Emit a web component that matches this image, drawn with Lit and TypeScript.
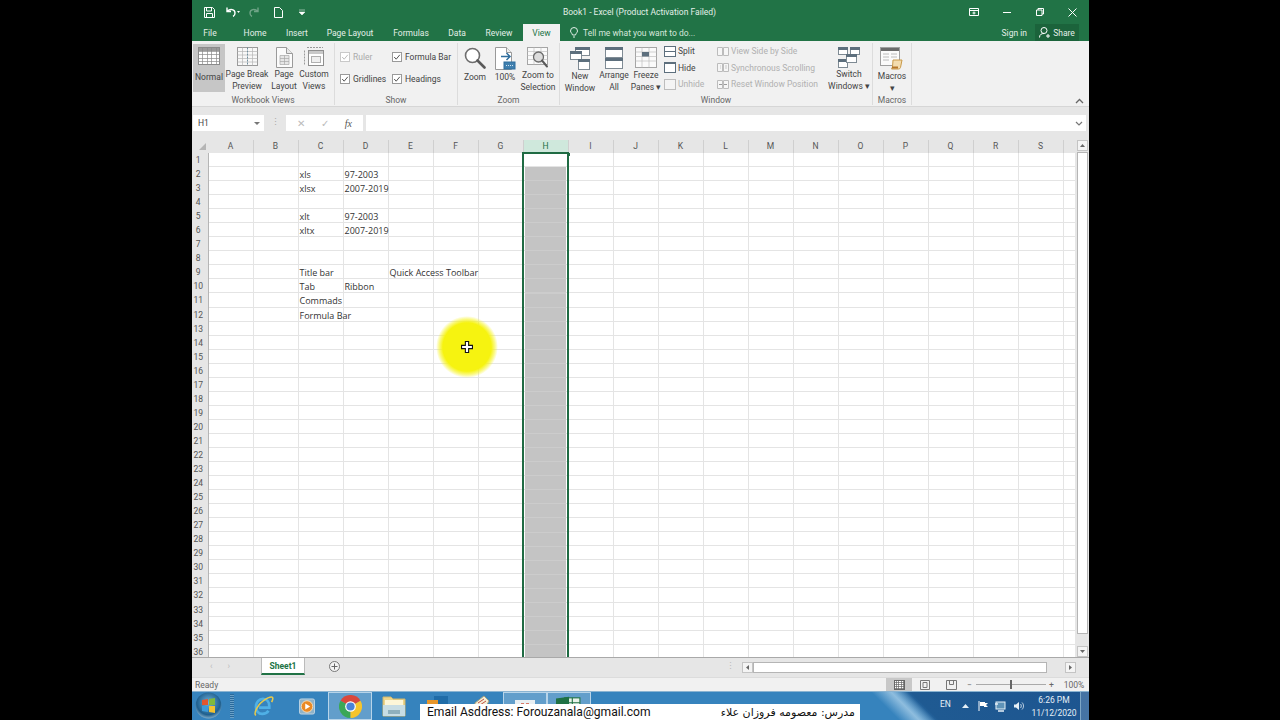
import { LitElement, html, svg, css, nothing } from 'lit';
import { customElement } from 'lit/decorators.js';

const COLS = 'ABCDEFGHIJKLMNOPQRS'.split('');
const ROWS = Array.from({ length: 36 }, (_, i) => i + 1);
const CELLS: Record<string, string> = {
  C2: 'xls', D2: '97-2003',
  C3: 'xlsx', D3: '2007-2019',
  C5: 'xlt', D5: '97-2003',
  C6: 'xltx', D6: '2007-2019',
  C9: 'Title bar', E9: 'Quick Access Toolbar',
  C10: 'Tab', D10: 'Ribbon',
  C11: 'Commads',
  C12: 'Formula Bar',
};

const TABS = [
  { label: 'File', cls: 'w-file' },
  { label: 'Home', cls: 'w-home' },
  { label: 'Insert', cls: 'w-insert' },
  { label: 'Page Layout', cls: 'w-layout' },
  { label: 'Formulas', cls: 'w-formulas' },
  { label: 'Data', cls: 'w-data' },
  { label: 'Review', cls: 'w-review' },
  { label: 'View', cls: 'w-view active' },
];

const gridIcon = (w = 22, h = 19, stroke = '#8d8d8d', head = '#cfcfcf') => {
  const xs = [0.2, 0.4, 0.6, 0.8].map((f) => Math.round(f * w) + 0.5);
  const ys = [0.2, 0.4, 0.6, 0.8].map((f) => Math.round(f * h) + 0.5);
  return html`<svg width=${w} height=${h} viewBox="0 0 ${w} ${h}">
    <rect x=".5" y=".5" width=${w - 1} height=${h - 1} fill="#fff" stroke=${stroke} />
    <rect x="1" y="1" width=${w - 2} height="3" fill=${head} />
    ${xs.map((x) => svg`<path d="M${x} 0V${h}" stroke=${stroke} stroke-width=".7" />`)}
    ${ys.map((y) => svg`<path d="M0 ${y}H${w}" stroke=${stroke} stroke-width=".7" />`)}
  </svg>`;
};

const pageBreakIcon = () => html`<svg width="21" height="19" viewBox="0 0 21 19">
  <rect x=".5" y=".5" width="20" height="18" fill="#f8f8f8" stroke="#9a9a9a" />
  <path d="M.5 4.5h20M.5 8h20M.5 11.5h20M.5 15h20M5.5 .5v18M15.5 .5v18" stroke="#b5b5b5" stroke-width=".7" />
  <path d="M10.5 .5v18" stroke="#6e8b9a" stroke-dasharray="2 1" />
</svg>`;

const pageIcon = () => html`<svg width="17" height="21" viewBox="0 0 17 21">
  <path d="M.5.5h10l6 6v14H.5z" fill="#fbfbfb" stroke="#9a9a9a" />
  <path d="M10.5.5v6h6" fill="#e8e8e8" stroke="#9a9a9a" />
  <path d="M4 8.5h9v9H4zM4 11.5h9M4 14.5h9M8.5 8.5v9" fill="#e6e6e6" stroke="#a8a8a8" stroke-width=".7" />
</svg>`;

const customIcon = () => html`<svg width="21" height="21" viewBox="0 0 21 21">
  <path d="M.5 3.5v14M3 .5h16" stroke="#9a9a9a" fill="none" stroke-dasharray="2 1" />
  <rect x="4.5" y="3.5" width="15" height="15" fill="#fff" stroke="#8f8f8f" />
  <rect x="5" y="4" width="14" height="3" fill="#c9c9c9" />
  <rect x="7.5" y="9.5" width="9" height="6" fill="#efefef" stroke="#b0b0b0" />
</svg>`;

const zoomIcon = () => html`<svg width="22" height="22" viewBox="0 0 22 22">
  <circle cx="8.5" cy="8.5" r="7" fill="#fff" stroke="#6e6e6e" stroke-width="1.6" />
  <path d="M13.5 13.5l7 7" stroke="#5a5a5a" stroke-width="2.6" stroke-linecap="round" />
</svg>`;

const hundredIcon = () => html`<svg width="22" height="24" viewBox="0 0 22 24">
  <path d="M1.5.5h11l5 5v17h-16z" fill="#fff" stroke="#9a9a9a" />
  <path d="M12.5.5v5h5" fill="#eee" stroke="#9a9a9a" />
  <path d="M7 9.5h9M12.5 6l3.5 3.5-3.5 3.5" fill="none" stroke="#2f6e9e" stroke-width="1.5" />
  <rect x="10" y="15" width="11" height="7" fill="#3f7fae" stroke="#2f6e9e" />
  <path d="M12 18.5h7" stroke="#cfe2ef" stroke-dasharray="1 1" />
</svg>`;

const zoomSelIcon = () => html`<svg width="22" height="22" viewBox="0 0 22 22">
  <rect x=".5" y=".5" width="20" height="17" fill="#fafafa" stroke="#a5a5a5" />
  <path d="M.5 4.5h20M.5 8.5h20M.5 12.5h20M7 .5v17M14 .5v17" stroke="#c2c2c2" stroke-width=".7" />
  <circle cx="11.5" cy="10" r="5" fill="#dcdcdc" stroke="#6b6b6b" stroke-width="1.3" />
  <path d="M15 13.5l5 6" stroke="#5a5a5a" stroke-width="2" stroke-linecap="round" />
</svg>`;

const win = (x: number, y: number, w: number, h: number) => svg`
  <rect x=${x + 0.5} y=${y + 0.5} width=${w} height=${h} fill="#fff" stroke="#7f8b94" />
  <rect x=${x} y=${y} width=${w + 1} height="3" fill="#5d6f7d" />
`;

const newWindowIcon = () => html`<svg width="20" height="23" viewBox="0 0 20 23">
  ${win(5, 0, 14, 8)} ${win(0, 4, 11, 8)} ${win(8, 12, 11, 10)}
</svg>`;

const arrangeIcon = () => html`<svg width="18" height="22" viewBox="0 0 18 22">
  ${win(0, 0, 17, 10)} ${win(0, 11, 17, 10)}
</svg>`;

const switchIcon = () => html`<svg width="22" height="21" viewBox="0 0 22 21">
  ${win(0, 0, 9, 7)} ${win(12, 0, 9, 7)} ${win(0, 12, 9, 8)} ${win(8, 7, 10, 8)}
</svg>`;

const freezeIcon = () => html`<svg width="22" height="22" viewBox="0 0 22 22">
  <rect x=".5" y=".5" width="21" height="20" fill="#fafafa" stroke="#a5a5a5" />
  <path d="M.5 5h21M.5 9.5h21M.5 14h21M7 .5v20M14 .5v20" stroke="#bdbdbd" stroke-width=".7" />
  <rect x="7" y="5" width="7" height="4.5" fill="#5d6f7d" />
</svg>`;

const smallWin = (dark: boolean, mode: string) => html`<svg width="12" height="11" viewBox="0 0 12 11">
  <rect x=".5" y=".5" width="11" height="10" fill=${dark ? '#fff' : '#f4f4f4'} stroke=${dark ? '#5d6f7d' : '#bdbdbd'} />
  ${mode === 'split' ? svg`<path d="M0 5.5h12" stroke="#5d6f7d" />` : nothing}
  ${mode === 'hide' ? svg`<path d="M0 1h12" stroke="#5d6f7d" stroke-width="2" />` : nothing}
</svg>`;

const sideIcon = (mode: string) => html`<svg width="12" height="11" viewBox="0 0 12 11">
  <path d="M.5 1.5h5v8h-5zM6.5 1.5h5v8h-5z" fill="#f6f6f6" stroke="#bcbcbc" />
  ${mode === 'sync' ? svg`<path d="M3 4h1M8 4h2M3 6h1M8 6h2" stroke="#c8c8c8" />` : nothing}
  ${mode === 'reset' ? svg`<path d="M2 5.5h3M7 5.5h3" stroke="#9a9a9a" />` : nothing}
</svg>`;

const macrosIcon = () => html`<svg width="24" height="23" viewBox="0 0 24 23">
  <rect x=".5" y=".5" width="19" height="18" fill="#fbfbfb" stroke="#a0a0a0" />
  <rect x="1" y="1" width="18" height="3" fill="#6b6b6b" />
  <path d="M3 7h6M11 7h6M3 10h6M11 10h6M3 13h6" stroke="#bcbcbc" />
  <path d="M13 13h9l-1.5 7.5c-.5 1-1 1.5-2 1.5h-7l1-2z" fill="#f3dcae" stroke="#c99a4a" />
  <path d="M12 20.5h6" stroke="#b5762a" stroke-width="2" />
</svg>`;

const check = (on: boolean) => html`<svg class="check" width="10" height="10" viewBox="0 0 10 10">
  <rect x=".5" y=".5" width="9" height="9" fill="#fff" stroke=${on ? '#9a9a9a' : '#c9c9c9'} />
  <path d="M2.2 5l2 2.2 3.6-4.4" fill="none" stroke=${on ? '#555' : '#bdbdbd'} />
</svg>`;

const startOrb = () => html`<svg width="27" height="27" viewBox="0 0 27 27">
  <defs>
    <radialGradient id="orb" cx=".5" cy=".4" r=".65">
      <stop offset="0" stop-color="#6fb3dd" />
      <stop offset=".7" stop-color="#1f5f8e" />
      <stop offset="1" stop-color="#9fc6dc" />
    </radialGradient>
  </defs>
  <circle cx="13.5" cy="13.5" r="13" fill="url(#orb)" />
  <path d="M7 8l6-1v6H7z" fill="#e2562f" />
  <path d="M14 7l6-1v7h-6z" fill="#7fb93d" />
  <path d="M7 14h6v6l-6-1z" fill="#3c9ad9" />
  <path d="M14 14h6v7l-6-1z" fill="#f2c230" />
</svg>`;

const ieIcon = () => html`<svg width="22" height="22" viewBox="0 0 28 28">
  <path d="M21 20c-2 3-5 4-8 4-5 0-8-4-8-9 0-6 4-10 9-10 5 0 8 4 8 9v2H9" fill="none" stroke="#4fb0e6" stroke-width="3.4" />
  <path d="M5 26C2 24 6 12 18 5c3-2 7-3 8-2 1 1 0 4-1 6" fill="none" stroke="#e8c94a" stroke-width="2" />
</svg>`;

const mediaIcon = () => html`<svg width="16" height="17" viewBox="0 0 18 18">
  <rect x=".5" y=".5" width="17" height="17" rx="2" fill="#8fb3c9" stroke="#c9dbe6" />
  <circle cx="9" cy="9" r="6.5" fill="#ea8a25" stroke="#fbe2bd" />
  <path d="M7 5.5l5.5 3.5-5.5 3.5z" fill="#fff" />
</svg>`;

const chromeIcon = () => html`<svg width="23" height="23" viewBox="0 0 24 24">
  <path d="M12 12L22.4 6A12 12 0 0 0 1.6 6z" fill="#d9473c" />
  <path d="M12 12L1.6 6A12 12 0 0 0 12 24z" fill="#3aa757" />
  <path d="M12 12V24A12 12 0 0 0 22.4 6z" fill="#f6c42c" />
  <circle cx="12" cy="12" r="5.6" fill="#fff" />
  <circle cx="12" cy="12" r="4.3" fill="#4a82d8" />
</svg>`;

const folderIcon = () => html`<svg width="24" height="22" viewBox="0 0 24 22">
  <path d="M1 2h8l2 2h12v17H1z" fill="#eed58a" stroke="#cdb66e" />
  <rect x="3" y="5" width="18" height="5" fill="#fdf6d8" />
  <path d="M1 10h22v11H1z" fill="#c8dde4" />
  <path d="M6 15h12v4H6z" fill="#8fb0bd" />
</svg>`;

const orangeBoxIcon = () => html`<svg width="24" height="22" viewBox="0 0 24 22">
  <path d="M1 5h7V1h14v20H1z" fill="#1f6ca8" />
  <path d="M1 5h11v16H1z" fill="#e8972c" />
</svg>`;

const notesIcon = () => html`<svg width="20" height="22" viewBox="0 0 20 22">
  <path d="M4 8L13 1l5 5-8 14H4z" fill="#f4efd8" stroke="#a7a27f" />
  <path d="M7 8l6-4M9 10l6-4" stroke="#c2503f" />
  <path d="M5 12l5 1" stroke="#4f9a52" stroke-width="2" />
</svg>`;

const paperIcon = () => html`<svg width="24" height="20" viewBox="0 0 24 20">
  <rect x="2" y="4" width="20" height="16" fill="#e9eff3" />
  <path d="M8 7h3v3H8zM13 7h3v3h-3z" fill="#d77a6a" />
</svg>`;

const excelIcon = () => html`<svg width="25" height="20" viewBox="0 0 23 17">
  <rect x="8" y="1" width="14" height="15" fill="#e8f2ea" stroke="#1f7144" />
  <path d="M8 5.5h14M8 9.5h14M15 1v15" stroke="#1f7144" />
  <path d="M0 1.5L12 0v17L0 15.5z" fill="#1f7144" />
</svg>`;

@customElement('app-root')
export class AppRoot extends LitElement {
  static styles = css`
    :host {
      display: block;
      width: 1280px;
      height: 720px;
      background: #000;
      overflow: hidden;
      font-family: Roboto, 'Open Sans', sans-serif;
      font-size: 8.5px;
      color: #444;
    }
    svg { display: block; flex: none; }
    .window {
      position: relative;
      margin-left: 192px;
      width: 897px;
      height: 720px;
      display: flex;
      flex-direction: column;
      background: #e6e6e6;
      overflow: hidden;
    }

    /* title and tabs */
    .title {
      height: 24px;
      flex: none;
      background: #217346;
      color: #e3efe8;
      display: grid;
      grid-template-columns: 1fr auto 1fr;
      align-items: center;
    }
    .qat { display: flex; align-items: center; padding-left: 6px; }
    .qat span { width: 23px; display: flex; justify-content: center; }
    .qat .off { opacity: 0.35; }
    .title-text { position: relative; left: -1px; }
    .win-btns { display: flex; justify-content: flex-end; }
    .win-btns span { width: 33px; display: flex; justify-content: center; }
    .tabs {
      height: 17px;
      flex: none;
      background: #217346;
      color: #e3efe8;
      display: flex;
      align-items: stretch;
    }
    .tab { display: flex; align-items: center; justify-content: center; white-space: nowrap; }
    .w-file { width: 36px; }
    .w-home { width: 54px; }
    .w-insert { width: 30px; }
    .w-layout { width: 76px; }
    .w-formulas { width: 46px; }
    .w-data { width: 46px; }
    .w-review { width: 38px; margin-right: 5px; }
    .w-view { width: 37px; }
    .tab.active { background: #f1f1f1; color: #217346; }
    .tell { display: flex; align-items: center; gap: 5px; margin-left: 10px; flex: 1; color: #d6e6dc; }
    .signin { margin-right: 8px; display: flex; align-items: center; }
    .share {
      width: 44px;
      margin-right: 10px;
      background: #1b633b;
      display: flex;
      align-items: center;
      justify-content: center;
      gap: 3px;
    }

    /* ribbon */
    .ribbon {
      height: 66px;
      flex: none;
      box-sizing: border-box;
      background: #f1f1f1;
      border-bottom: 1px solid #d6d6d6;
      display: flex;
      position: relative;
    }
    .group {
      display: flex;
      flex-direction: column;
      border-right: 1px solid #dcdcdc;
      margin: 2px 0 1px;
      box-sizing: border-box;
    }
    .g-views { width: 143px; }
    .g-show { width: 123px; }
    .g-zoom { width: 102px; }
    .g-window { width: 313px; }
    .g-macros { width: 39px; }
    .group-body { flex: 1; display: flex; min-height: 0; }
    .group-label { height: 12px; line-height: 14px; text-align: center; color: #666; flex: none; }
    .big {
      display: flex;
      flex-direction: column;
      align-items: center;
      flex: none;
      box-sizing: border-box;
      height: 48px;
      margin-top: 1px;
      line-height: 12px;
      white-space: nowrap;
    }
    .big .ico { height: 27px; padding-top: 3px; box-sizing: border-box; display: flex; align-items: flex-start; }
    .big.on { background: #c6c6c6; }
    .b28 { width: 28px; }
    .b30 { width: 30px; }
    .b32 { width: 32px; }
    .b34 { width: 34px; }
    .b36 { width: 36px; margin-left: 1px; }
    .b38 { width: 38px; }
    .b44 { width: 44px; }
    .pad-3 { padding-left: 3px; }
    .pad-1 { padding-left: 1px; }
    .show-grid {
      display: grid;
      grid-template-columns: 52px auto;
      grid-auto-rows: 22px;
      padding: 3px 0 0 5px;
    }
    .chk { display: flex; align-items: center; gap: 3px; white-space: nowrap; }
    .chk.dim { color: #aaa; }
    .stack { display: flex; flex-direction: column; flex: none; }
    .stack-a { width: 53px; margin-left: 3px; }
    .stack-b { width: 113px; }
    .small { height: 16.5px; display: flex; align-items: center; gap: 2px; white-space: nowrap; }
    .small.dim { color: #b0b0b0; }
    .collapse { position: absolute; right: 5px; bottom: 2px; }

    /* formula bar */
    .fbar {
      height: 33px;
      flex: none;
      display: flex;
      align-items: flex-start;
      padding-top: 8px;
      box-sizing: border-box;
      background: #e6e6e6;
    }
    .fbox { background: #fff; height: 16px; display: flex; align-items: center; box-sizing: border-box; }
    .namebox { width: 71px; margin-left: 1px; padding: 0 4px 0 5px; justify-content: space-between; }
    .dots { width: 22px; text-align: center; color: #aaa; line-height: 14px; }
    .fxbtns { width: 77px; justify-content: space-around; padding: 0 3px; margin-right: 3px; color: #bbb; font-size: 10px; }
    .fx { font-family: 'Liberation Serif', serif; font-style: italic; color: #555; font-size: 10px; }
    .finput { width: 720px; justify-content: flex-end; padding-right: 3px; }

    /* sheet */
    .sheet { height: 517px; flex: none; display: flex; position: relative; background: #e6e6e6; }
    .cells { width: 883px; overflow: hidden; position: relative; flex: none; }
    .head { height: 13px; display: flex; background: #e6e6e6; }
    .corner { width: 16.5px; position: relative; flex: none; }
    .corner svg { position: absolute; left: 7px; top: 3px; }
    .colh {
      width: 45px;
      flex: none;
      box-sizing: border-box;
      border-right: 1px solid #cfcfcf;
      text-align: center;
      line-height: 12px;
      color: #555;
    }
    .colh.sel { background: #cfe8dc; color: #217346; border-bottom: 1px solid #217346; }
    .colh.rest { width: 11.5px; border: 0; }
    .row { height: 14.06px; display: flex; }
    .rowh {
      width: 16.5px;
      flex: none;
      box-sizing: border-box;
      border-right: 1px solid #b5b5b5;
      text-align: center;
      line-height: 15px;
      color: #555;
      padding-right: 3px;
    }
    .cell {
      width: 45px;
      flex: none;
      box-sizing: border-box;
      background: #fff;
      border-right: 1px solid #e4e4e4;
      border-bottom: 1px solid #e4e4e4;
      padding-left: 1px;
      line-height: 15px;
      color: #333;
      white-space: nowrap;
      font-family: 'Open Sans', sans-serif;
      font-size: 9px;
    }
    .cell.rest { width: 11.5px; padding: 0; border-right: 0; }
    .cell.has { position: relative; z-index: 1; }
    .selection {
      position: absolute;
      left: 330px;
      top: 12px;
      width: 47px;
      bottom: 0;
      box-sizing: border-box;
      border: 2px solid #1f6b43;
      border-bottom: 0;
      padding: 13px 1px 0;
      z-index: 2;
    }
    .selection div {
      height: 100%;
      background: repeating-linear-gradient(#c4c4c4 0 13px, #cccccc 13px 14.06px);
    }
    .handle { position: absolute; right: -3px; top: -1px; width: 3px; height: 3px; background: #1f6b43; }
    .glow {
      position: absolute;
      left: 244px;
      top: 176px;
      width: 62px;
      height: 62px;
      border-radius: 50%;
      background: radial-gradient(circle closest-side, #f6f310 0, #f6f310 78%, rgba(246, 243, 16, 0.5) 90%, rgba(246, 243, 16, 0) 100%);
      z-index: 3;
      display: flex;
      align-items: center;
      justify-content: center;
    }
    .vscroll { flex: 1; position: relative; display: flex; flex-direction: column; align-items: center; }
    .sb-btn {
      width: 11px;
      height: 11px;
      box-sizing: border-box;
      border: 1px solid #c4c4c4;
      background: #f4f4f4;
      display: flex;
      align-items: center;
      justify-content: center;
      flex: none;
    }
    .vtrack { flex: 1; width: 11px; margin: 1px 0; }
    .vthumb { height: 482px; box-sizing: border-box; background: #fff; border: 1px solid #b5b5b5; }

    /* sheet tabs */
    .sheetbar {
      height: 20px;
      flex: none;
      box-sizing: border-box;
      border-top: 1px solid #a9a9a9;
      background: #e6e6e6;
      display: flex;
      align-items: flex-start;
      color: #bbb;
    }
    .nav { width: 69px; display: flex; padding-left: 18px; gap: 15px; box-sizing: border-box; line-height: 17px; }
    .sheettab {
      width: 44px;
      height: 17px;
      box-sizing: border-box;
      background: #fff;
      border-left: 1px solid #bbb;
      border-right: 1px solid #bbb;
      border-bottom: 2px solid #217346;
      color: #217346;
      font-weight: 700;
      text-align: center;
      line-height: 16px;
    }
    .addsheet { margin: 3px 0 0 24px; width: 397px; }
    .hdots { width: 16px; margin-top: 1px; line-height: 15px; }
    .hscroll { display: flex; align-items: center; margin-top: 4px; }
    .hthumb { width: 294px; height: 11px; box-sizing: border-box; background: #fff; border: 1px solid #b5b5b5; }
    .htrack { width: 18px; }

    /* status bar */
    .status {
      height: 14px;
      flex: none;
      background: #f1f1f1;
      display: flex;
      align-items: center;
      color: #666;
      border-top: 1px solid #dcdcdc;
      box-sizing: border-box;
    }
    .ready { padding-left: 3px; flex: 1; }
    .vbtn { width: 26px; height: 13px; display: flex; align-items: center; justify-content: center; }
    .vbtn.on { background: #c8c8c8; }
    .zoomer { display: flex; align-items: center; margin-left: 3px; width: 92px; }
    .slider { position: relative; width: 70px; height: 1px; background: #aaa; margin: 0 3px 0 4px; }
    .slider i { position: absolute; left: 34px; top: -4px; width: 2px; height: 9px; background: #666; }
    .pct { width: 30px; text-align: center; }

    /* taskbar */
    .taskbar {
      height: 29px;
      flex: none;
      display: flex;
      align-items: flex-start;
      background:
        linear-gradient(45deg, rgba(190, 220, 240, 0) 500px, rgba(190, 220, 240, 0.65) 514px, rgba(190, 220, 240, 0) 526px),
        linear-gradient(45deg, #3683bd 516px, #1f5a92 528px, #1d5590 100%);
      border-top: 1px solid #8ab3d1;
      box-sizing: border-box;
      color: #e6f0f7;
      position: relative;
    }
    .start { width: 32px; display: flex; justify-content: center; }
    .grip { width: 4px; height: 24px; margin: 2px 6px 0; background: repeating-linear-gradient(#2a6a9c 0 1px, #68a0c8 1px 2px); }
    .slots { display: flex; margin-left: 1px; }
    .slot { width: 43.7px; height: 28px; display: flex; justify-content: center; align-items: center; box-sizing: border-box; }
    .slot.open { background: rgba(255, 255, 255, 0.22); border: 1px solid rgba(220, 235, 245, 0.7); }
    .tray { position: absolute; right: 0; top: 0; height: 28px; display: flex; align-items: center; }
    .tray .lang { width: 22px; padding-left: 6px; box-sizing: border-box; margin-bottom: 5px; }
    .tray .ic { width: 18px; display: flex; justify-content: center; }
    .clock { width: 52px; text-align: center; line-height: 13px; padding-top: 2px; }
    .desk { width: 9px; height: 28px; background: rgba(255, 255, 255, 0.18); border-left: 1px solid #7da6c6; box-sizing: border-box; }
    .caption {
      position: absolute;
      left: 228px;
      right: 229px;
      bottom: 0;
      height: 16px;
      background: #fff;
      color: #111;
      display: flex;
      justify-content: space-between;
      align-items: center;
      padding: 0 5px 0 7px;
      z-index: 4;
      font-size: 12.1px;
      white-space: nowrap;
    }
    .ar { font-family: 'DejaVu Sans', sans-serif; font-size: 11px; direction: rtl; }
  `;

  private renderBig(icon: unknown, lines: string[], widthCls: string, on = false) {
    return html`<div class="big ${widthCls} ${on ? 'on' : ''}">
      <div class="ico">${icon}</div>
      ${lines.map((l) => html`<div>${l}</div>`)}
    </div>`;
  }

  private renderRibbon() {
    return html`<div class="ribbon">
      <div class="group g-views">
        <div class="group-body pad-1">
          ${this.renderBig(gridIcon(22, 18, '#8a8a8a', '#9a9a9a'), ['Normal'], 'b32', true)}
          ${this.renderBig(pageBreakIcon(), ['Page Break', 'Preview'], 'b44')}
          ${this.renderBig(pageIcon(), ['Page', 'Layout'], 'b30')}
          ${this.renderBig(customIcon(), ['Custom', 'Views'], 'b30')}
        </div>
        <div class="group-label">Workbook Views</div>
      </div>
      <div class="group g-show">
        <div class="group-body show-grid">
          <div class="chk dim">${check(false)}Ruler</div>
          <div class="chk">${check(true)}Formula Bar</div>
          <div class="chk">${check(true)}Gridlines</div>
          <div class="chk">${check(true)}Headings</div>
        </div>
        <div class="group-label">Show</div>
      </div>
      <div class="group g-zoom">
        <div class="group-body pad-3">
          ${this.renderBig(zoomIcon(), ['Zoom'], 'b28')}
          ${this.renderBig(hundredIcon(), ['100%'], 'b32')}
          ${this.renderBig(zoomSelIcon(), ['Zoom to', 'Selection'], 'b34')}
        </div>
        <div class="group-label">Zoom</div>
      </div>
      <div class="group g-window">
        <div class="group-body pad-3">
          ${this.renderBig(newWindowIcon(), ['New', 'Window'], 'b34')}
          ${this.renderBig(arrangeIcon(), ['Arrange', 'All'], 'b34')}
          ${this.renderBig(freezeIcon(), ['Freeze', 'Panes ▾'], 'b30')}
          <div class="stack stack-a">
            <div class="small">${smallWin(true, 'split')}Split</div>
            <div class="small">${smallWin(true, 'hide')}Hide</div>
            <div class="small dim">${smallWin(false, '')}Unhide</div>
          </div>
          <div class="stack stack-b">
            <div class="small dim">${sideIcon('')}View Side by Side</div>
            <div class="small dim">${sideIcon('sync')}Synchronous Scrolling</div>
            <div class="small dim">${sideIcon('reset')}Reset Window Position</div>
          </div>
          ${this.renderBig(switchIcon(), ['Switch', 'Windows ▾'], 'b36')}
        </div>
        <div class="group-label">Window</div>
      </div>
      <div class="group g-macros">
        <div class="group-body">
          ${this.renderBig(macrosIcon(), ['Macros', '▾'], 'b38')}
        </div>
        <div class="group-label">Macros</div>
      </div>
      <svg class="collapse" width="9" height="6" viewBox="0 0 9 6">
        <path d="M1 5l3.5-3.5L8 5" fill="none" stroke="#666" stroke-width="1.3" />
      </svg>
    </div>`;
  }

  private renderSheet() {
    return html`<div class="sheet">
      <div class="cells">
        <div class="head">
          <div class="corner">
            <svg width="7" height="7" viewBox="0 0 7 7"><path d="M7 0v7H0z" fill="#b5b5b5" /></svg>
          </div>
          ${COLS.map((c) => html`<div class="colh ${c === 'H' ? 'sel' : ''}">${c}</div>`)}
          <div class="colh rest"></div>
        </div>
        ${ROWS.map(
          (r) => html`<div class="row">
            <div class="rowh">${r}</div>
            ${COLS.map((c) => {
              const v = CELLS[c + r];
              return html`<div class="cell ${v ? 'has' : ''}">${v ?? ''}</div>`;
            })}
            <div class="cell rest"></div>
          </div>`,
        )}
        <div class="selection"><div></div><span class="handle"></span></div>
        <div class="glow">
          <svg width="12" height="12" viewBox="0 0 11 11">
            <path d="M4 .5h3V4h3.5v3H7v3.5H4V7H.5V4H4z" fill="#fff" stroke="#111" />
          </svg>
        </div>
      </div>
      <div class="vscroll">
        <div class="sb-btn"><svg width="5" height="3" viewBox="0 0 5 3"><path d="M2.5 0L5 3H0z" fill="#666" /></svg></div>
        <div class="vtrack"><div class="vthumb"></div></div>
        <div class="sb-btn"><svg width="5" height="3" viewBox="0 0 5 3"><path d="M0 0h5L2.5 3z" fill="#666" /></svg></div>
      </div>
    </div>`;
  }

  private renderBars() {
    return html`<div class="sheetbar">
        <div class="nav"><span>‹</span><span>›</span></div>
        <div class="sheettab">Sheet1</div>
        <div class="addsheet">
          <svg width="11" height="11" viewBox="0 0 11 11">
            <circle cx="5.5" cy="5.5" r="5" fill="#f4f4f4" stroke="#777" />
            <path d="M5.5 2.5v6M2.5 5.5h6" stroke="#666" />
          </svg>
        </div>
        <div class="hdots">⋮</div>
        <div class="hscroll">
          <div class="sb-btn"><svg width="3" height="5" viewBox="0 0 3 5"><path d="M3 0v5L0 2.5z" fill="#666" /></svg></div>
          <div class="hthumb"></div>
          <div class="htrack"></div>
          <div class="sb-btn"><svg width="3" height="5" viewBox="0 0 3 5"><path d="M0 0l3 2.5L0 5z" fill="#666" /></svg></div>
        </div>
      </div>
      <div class="status">
        <div class="ready">Ready</div>
        <div class="vbtn on">${gridIcon(11, 10, '#666', '#fff')}</div>
        <div class="vbtn">
          <svg width="10" height="10" viewBox="0 0 10 10"><path d="M.5.5h9v9h-9zM3 2.5h4v5H3z" fill="none" stroke="#777" /></svg>
        </div>
        <div class="vbtn">
          <svg width="11" height="10" viewBox="0 0 11 10"><path d="M.5.5h10v9H.5zM3.5.5v4h4v-4" fill="none" stroke="#777" /></svg>
        </div>
        <div class="zoomer">
          <span>−</span>
          <div class="slider"><i></i></div>
          <span>+</span>
        </div>
        <div class="pct">100%</div>
      </div>`;
  }

  private renderTaskbar() {
    return html`<div class="taskbar">
      <div class="start">${startOrb()}</div>
      <div class="grip"></div>
      <div class="slots">
        <div class="slot">${ieIcon()}</div>
        <div class="slot">${mediaIcon()}</div>
        <div class="slot open">${chromeIcon()}</div>
        <div class="slot">${folderIcon()}</div>
        <div class="slot">${orangeBoxIcon()}</div>
        <div class="slot">${notesIcon()}</div>
        <div class="slot open">${paperIcon()}</div>
        <div class="slot open">${excelIcon()}</div>
      </div>
      <div class="tray">
        <div class="lang">EN</div>
        <div class="ic">
          <svg width="7" height="4" viewBox="0 0 7 4"><path d="M3.5 0L7 4H0z" fill="#e6f0f7" /></svg>
        </div>
        <div class="ic">
          <svg width="11" height="10" viewBox="0 0 11 10"><path d="M1 0v10" stroke="#fff" /><path d="M2 1h5v1h3L8 4l2 2H6V5H2z" fill="#fff" /></svg>
        </div>
        <div class="ic">
          <svg width="12" height="11" viewBox="0 0 12 11"><rect x="1" y="1" width="9" height="7" fill="#5f93b8" stroke="#e6f0f7" /><path d="M3 10h6M0 3h3" stroke="#e6f0f7" stroke-width="1.5" /></svg>
        </div>
        <div class="ic">
          <svg width="10" height="10" viewBox="0 0 10 10"><path d="M0 3.5h2L5 1v8L2 6.5H0z" fill="#e6f0f7" /><path d="M6.5 3c1 1 1 3 0 4M8 1.5c2 2 2 5 0 7" fill="none" stroke="#e6f0f7" stroke-width=".8" /></svg>
        </div>
        <div class="clock">6:26 PM<br />11/12/2020</div>
        <div class="desk"></div>
      </div>
      <div class="caption">
        <span>Email Asddress: Forouzanala@gmail.com</span>
        <span class="ar">مدرس: معصومه فروزان علاء</span>
      </div>
    </div>`;
  }

  render() {
    return html`<div class="window">
      <div class="title">
        <div class="qat">
          <span>
            <svg width="11" height="11" viewBox="0 0 11 11"><path d="M.5.5h8l2 2v8H.5z" fill="none" stroke="#fff" /><path d="M2.5 1v3h5V1M2.5 10V6.5h6V10" fill="none" stroke="#fff" /></svg>
          </span>
          <span>
            <svg width="15" height="10" viewBox="0 0 15 10"><path d="M2 .5v4h4M2.5 4C5 1.5 10 2 10 6c0 1.5-1 3-2 3.5" fill="none" stroke="#fff" stroke-width="1.4" /><path d="M12 4h3l-1.5 2z" fill="#fff" /></svg>
          </span>
          <span class="off">
            <svg width="15" height="10" viewBox="0 0 15 10"><path d="M10 .5v4H6M9.5 4C7 1.5 2 2 2 6c0 1.5 1 3 2 3.5" fill="none" stroke="#fff" stroke-width="1.4" /></svg>
          </span>
          <span>
            <svg width="9" height="11" viewBox="0 0 9 11"><path d="M.5.5h5l3 3v7h-8z" fill="none" stroke="#fff" /></svg>
          </span>
          <span>
            <svg width="6" height="6" viewBox="0 0 6 6"><path d="M0 1h6M0 3h6L3 6z" fill="#fff" stroke="#fff" stroke-width=".5" /></svg>
          </span>
        </div>
        <div class="title-text">Book1 - Excel (Product Activation Failed)</div>
        <div class="win-btns">
          <span>
            <svg width="10" height="8" viewBox="0 0 10 8"><path d="M.5.5h9v7h-9zM.5 2.5h9M5 3.5v3M3.5 5h3" fill="none" stroke="#fff" /></svg>
          </span>
          <span>
            <svg width="8" height="8" viewBox="0 0 8 8"><path d="M0 4.5h8" stroke="#fff" /></svg>
          </span>
          <span>
            <svg width="8" height="8" viewBox="0 0 8 8"><path d="M.5 2H6v5.5H.5zM2 2V.5h5.5V6H6" fill="none" stroke="#fff" /></svg>
          </span>
          <span>
            <svg width="9" height="9" viewBox="0 0 9 9"><path d="M.5.5l8 8M8.5.5l-8 8" stroke="#fff" /></svg>
          </span>
        </div>
      </div>
      <div class="tabs">
        ${TABS.map((t) => html`<div class="tab ${t.cls}">${t.label}</div>`)}
        <div class="tell">
          <svg width="8" height="11" viewBox="0 0 8 11"><path d="M2.5 8C2 6 .5 5.5.5 4a3.5 3.5 0 0 1 7 0C7.5 5.5 6 6 5.5 8zM3 10h2" fill="none" stroke="#e3efe8" /></svg>
          <span>Tell me what you want to do...</span>
        </div>
        <div class="signin">Sign in</div>
        <div class="share">
          <svg width="11" height="11" viewBox="0 0 11 11"><circle cx="5" cy="3.5" r="3" fill="none" stroke="#fff" /><path d="M.5 10.5c0-3 2-4 4.5-4M7 9h4M9 7v4" fill="none" stroke="#fff" /></svg>
          Share
        </div>
      </div>
      ${this.renderRibbon()}
      <div class="fbar">
        <div class="fbox namebox">
          <span>H1</span>
          <svg width="6" height="3" viewBox="0 0 6 3"><path d="M0 0h6L3 3z" fill="#777" /></svg>
        </div>
        <div class="dots">⋮</div>
        <div class="fbox fxbtns">
          <span>✕</span><span>✓</span><span class="fx">fx</span>
        </div>
        <div class="fbox finput">
          <svg width="8" height="5" viewBox="0 0 8 5"><path d="M1 1l3 3 3-3" fill="none" stroke="#777" stroke-width="1.2" /></svg>
        </div>
      </div>
      ${this.renderSheet()} ${this.renderBars()} ${this.renderTaskbar()}
    </div>`;
  }
}
